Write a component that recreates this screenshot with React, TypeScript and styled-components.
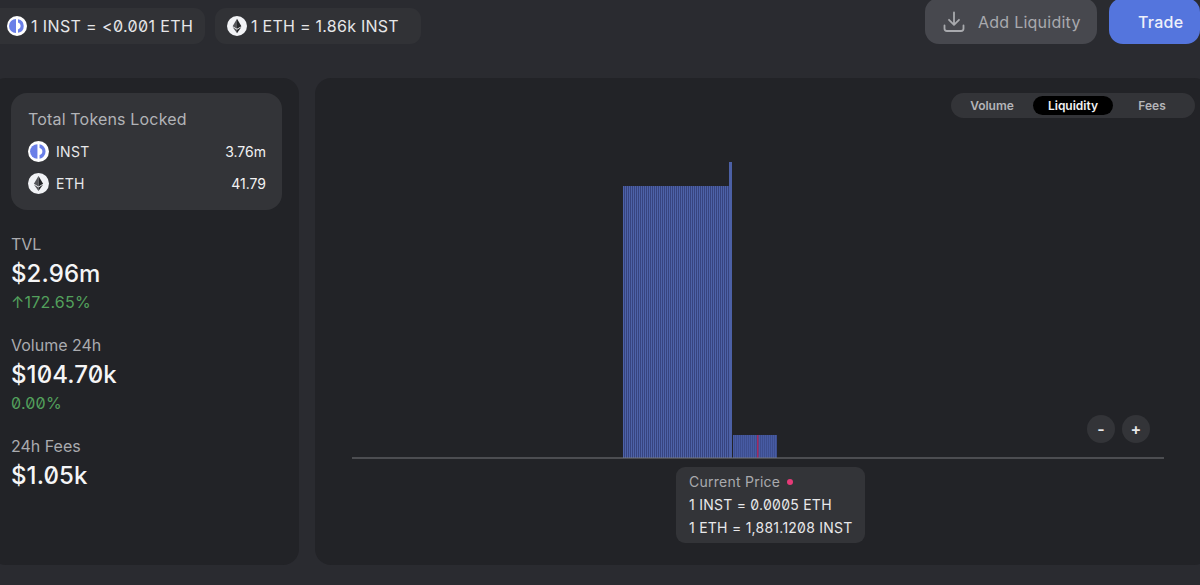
import React from "react";
import styled, { createGlobalStyle } from "styled-components";

const Global = createGlobalStyle`
  html, body { margin: 0; padding: 0; background: #2a2b30; overflow: hidden; }
  body { font-family: Inter, "Noto Sans", "Liberation Sans", sans-serif; font-feature-settings: "zero" 1; -webkit-font-smoothing: antialiased; }
`;

const Page = styled.div`
  width: 1220px;
  height: 585px;
  margin: 0 -10px;
  display: flex;
  flex-direction: column;
  overflow: hidden;
`;
const TopBar = styled.div`
  display: flex;
  justify-content: space-between;
  align-items: flex-start;
  height: 78px;
  flex: none;
  padding-right: 10px;
  box-sizing: border-box;
`;
const Pills = styled.div`
  display: flex;
  gap: 10px;
  padding-top: 8px;
`;
const Pill = styled.div<{ $w: number; $pad: number; $track: number }>`
  width: ${(p) => p.$w}px;
  height: 36px;
  box-sizing: border-box;
  padding-left: ${(p) => p.$pad}px;
  display: flex;
  align-items: center;
  gap: 4px;
  background: #313236;
  border-radius: 11px;
  color: #e6e6e8;
  font-size: 16px;
  letter-spacing: ${(p) => p.$track}px;
  line-height: 20px;
  white-space: nowrap;
`;
const Actions = styled.div`
  display: flex;
  gap: 12px;
  margin-top: -2px;
`;
const ActionButton = styled.div<{ $primary?: boolean }>`
  height: 46px;
  box-sizing: border-box;
  width: ${(p) => (p.$primary ? 91 : 172)}px;
  border-radius: 14px;
  display: flex;
  align-items: center;
  padding-top: 2px;
  padding-left: ${(p) => (p.$primary ? 29 : 18)}px;
  gap: 13px;
  font-size: 16px;
  font-weight: ${(p) => (p.$primary ? 500 : 400)};
  letter-spacing: 0.25px;
  color: ${(p) => (p.$primary ? "#eef0fa" : "#a9aaae")};
  background: ${(p) => (p.$primary ? "#5475dd" : "#47484e")};
`;
const Body = styled.div`
  display: flex;
  gap: 16px;
  height: 487px;
  flex: none;
`;
const Side = styled.aside`
  width: 309px;
  flex: none;
  box-sizing: border-box;
  background: #222327;
  border-radius: 16px;
  padding: 15px 17px 0 21px;
`;
const TokenCard = styled.section`
  height: 117px;
  box-sizing: border-box;
  background: #333438;
  border-radius: 16px;
  padding: 16px 16px 0 17px;
`;
const CardTitle = styled.div`
  font-size: 16px;
  letter-spacing: 0.17px;
  line-height: 20px;
  color: #b2b3b7;
  margin-bottom: 11px;
`;
const TokenRow = styled.div`
  display: flex;
  align-items: center;
  height: 22px;
  margin-bottom: 10px;
  font-size: 14px;
  letter-spacing: 0.3px;
  color: #e8e8ea;
`;
const TokenName = styled.span`
  margin-left: 7px;
  flex: 1;
`;
const TokenValue = styled.span`
  color: #f2f2f3;
  letter-spacing: 0;
`;
const Stats = styled.div`
  display: flex;
  flex-direction: column;
  gap: 25px;
  padding-top: 24px;
`;
const Stat = styled.div`
  height: 76px;
`;
const StatLabel = styled.div`
  font-size: 16px;
  line-height: 20px;
  color: #aaabaf;
`;
const StatValue = styled.div`
  font-size: 24px;
  line-height: 34px;
  margin-top: 3px;
  font-weight: 500;
  letter-spacing: 0.1px;
  color: #f5f5f6;
`;
const StatChange = styled.div`
  font-size: 16px;
  line-height: 22px;
  color: #53a05c;
  letter-spacing: 0.2px;
`;
const ChartPanel = styled.main`
  position: relative;
  flex: 1;
  background: #222327;
  border-radius: 16px;
`;
const ToggleRow = styled.div`
  display: flex;
  justify-content: flex-end;
  padding: 15px 15px 0 0;
`;
const Toggle = styled.div`
  display: flex;
  align-items: center;
  width: 244px;
  height: 25px;
  box-sizing: border-box;
  padding: 3px 4px 3px 0;
  background: #333438;
  border-radius: 13px;
  font-size: 12px;
  font-weight: 600;
`;
const ToggleItem = styled.div<{ $active?: boolean; $w: number }>`
  width: ${(p) => p.$w}px;
  height: 19px;
  line-height: 19px;
  text-align: center;
  border-radius: 10px;
  background: ${(p) => (p.$active ? "#000" : "transparent")};
  color: ${(p) => (p.$active ? "#f2f2f3" : "#b4b5b8")};
`;
const ChartSvg = styled.svg`
  display: block;
  margin-top: 44px;
`;
const Zoom = styled.div`
  position: absolute;
  left: 772px;
  top: 337px;
  display: flex;
  gap: 7px;
`;
const ZoomBtn = styled.div`
  width: 28px;
  height: 28px;
  border-radius: 50%;
  background: #333438;
  color: #e8e8ea;
  font-size: 16px;
  font-weight: 600;
  line-height: 28px;
  text-align: center;
`;
const Tip = styled.div`
  position: absolute;
  left: 361px;
  top: 389px;
  width: 189px;
  height: 76px;
  box-sizing: border-box;
  padding: 3px 13px 0;
  background: #333438;
  border-radius: 9px;
  font-size: 14px;
  letter-spacing: 0.25px;
  line-height: 23.5px;
  color: #e8e8ea;
  white-space: nowrap;
`;
const TipTitle = styled.div`
  color: #a9aaae;
  display: flex;
  align-items: center;
  gap: 7px;
  margin-bottom: -1px;
`;
const Dot = styled.span`
  width: 6px;
  height: 6px;
  border-radius: 50%;
  background: #e63a78;
`;

const InstIcon = ({ size = 20 }: { size?: number }) => (
  <svg width={size} height={size} viewBox="0 0 20 20" style={{ flex: "none" }}>
    <circle cx="10" cy="10" r="10" fill="#fff" />
    <path d="M9 3 A7 7 0 0 0 9 17 Z" fill="#6a7fe8" />
    <path d="M11 3.2 A6.9 6.9 0 0 1 11 16.8 L11 13.4 A3.5 3.5 0 0 0 11 6.6 Z" fill="#6a7fe8" />
  </svg>
);
const EthIcon = ({ size = 20 }: { size?: number }) => (
  <svg width={size} height={size} viewBox="0 0 20 20" style={{ flex: "none" }}>
    <circle cx="10" cy="10" r="10" fill="#f2f3f6" />
    <path d="M10 2.8 L5.6 10.2 L10 12.8 Z" fill="#55565a" />
    <path d="M10 2.8 L14.4 10.2 L10 12.8 Z" fill="#26272a" />
    <path d="M5.6 11 L10 17.2 L10 13.7 Z" fill="#55565a" />
    <path d="M14.4 11 L10 17.2 L10 13.7 Z" fill="#26272a" />
  </svg>
);
const DownloadIcon = () => (
  <svg width="22" height="22" viewBox="0 0 22 22" fill="none" stroke="#a9aaae" strokeWidth="1.8" strokeLinecap="round" strokeLinejoin="round">
    <path d="M11 1.5 V13.5 M6 8.8 L11 13.8 L16 8.8" />
    <path d="M1.5 14.5 V17.5 A2.5 2.5 0 0 0 4 20 H18 A2.5 2.5 0 0 0 20.5 17.5 V14.5" />
  </svg>
);

const range = (from: number, to: number, step: number) => {
  const out: number[] = [];
  for (let x = from; x < to; x += step) out.push(x);
  return out;
};

const Chart = () => (
  <ChartSvg width="885" height="300" viewBox="315 162 885 300">
    <rect x="623" y="186" width="106" height="272" fill="#37447f" />
    {range(623, 729, 2).map((x) => (
      <rect key={x} x={x} y="186" width="1.2" height="272" fill="#4d62a8" shapeRendering="crispEdges" />
    ))}
    <rect x="729" y="162" width="3" height="296" fill="#4c60a5" />
    <rect x="733" y="435" width="44" height="23" fill="#3d4e8f" />
    {range(733, 777, 2).map((x) => (
      <rect key={x} x={x} y="435" width="1.2" height="23" fill="#475ba3" shapeRendering="crispEdges" />
    ))}
    <rect x="757" y="435" width="1.5" height="23" fill="#a52a60" />
    <rect x="352" y="457.5" width="812" height="1" fill="#77787c" />
  </ChartSvg>
);

export default function App() {
  return (
    <Page>
      <Global />
      <TopBar>
        <Pills>
          <Pill $w={215} $pad={17} $track={0.38}>
            <InstIcon />1 INST = &lt;0.001 ETH
          </Pill>
          <Pill $w={206} $pad={12} $track={0.26}>
            <EthIcon />1 ETH = 1.86k INST
          </Pill>
        </Pills>
        <Actions>
          <ActionButton>
            <DownloadIcon />
            Add Liquidity
          </ActionButton>
          <ActionButton $primary>Trade</ActionButton>
        </Actions>
      </TopBar>
      <Body>
        <Side>
          <TokenCard>
            <CardTitle>Total Tokens Locked</CardTitle>
            <TokenRow>
              <InstIcon size={21} />
              <TokenName>INST</TokenName>
              <TokenValue>3.76m</TokenValue>
            </TokenRow>
            <TokenRow>
              <EthIcon size={21} />
              <TokenName>ETH</TokenName>
              <TokenValue>41.79</TokenValue>
            </TokenRow>
          </TokenCard>
          <Stats>
            <Stat>
              <StatLabel>TVL</StatLabel>
              <StatValue>$2.96m</StatValue>
              <StatChange>↑172.65%</StatChange>
            </Stat>
            <Stat>
              <StatLabel>Volume 24h</StatLabel>
              <StatValue>$104.70k</StatValue>
              <StatChange>0.00%</StatChange>
            </Stat>
            <Stat>
              <StatLabel>24h Fees</StatLabel>
              <StatValue>$1.05k</StatValue>
            </Stat>
          </Stats>
        </Side>
        <ChartPanel>
          <ToggleRow>
            <Toggle>
              <ToggleItem $w={82}>Volume</ToggleItem>
              <ToggleItem $w={80} $active>Liquidity</ToggleItem>
              <ToggleItem $w={78}>Fees</ToggleItem>
            </Toggle>
          </ToggleRow>
          <Chart />
          <Zoom>
            <ZoomBtn>-</ZoomBtn>
            <ZoomBtn>+</ZoomBtn>
          </Zoom>
          <Tip>
            <TipTitle>Current Price<Dot /></TipTitle>
            <div>1 INST = 0.0005 ETH</div>
            <div>1 ETH = 1,881.1208 INST</div>
          </Tip>
        </ChartPanel>
      </Body>
    </Page>
  );
}
